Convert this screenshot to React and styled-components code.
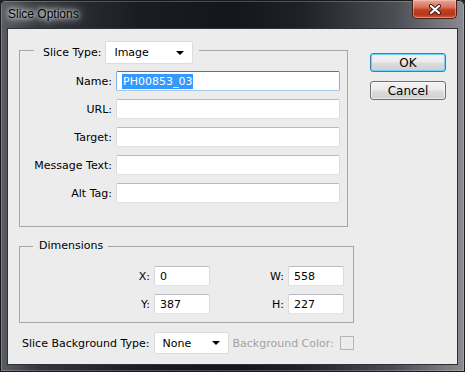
import React from "react";
import styled, { createGlobalStyle } from "styled-components";

const GlobalStyle = createGlobalStyle`
  html, body {
    margin: 0;
    padding: 0;
    background: #1c1e24;
  }
  * {
    box-sizing: border-box;
  }
`;

const Window = styled.div`
  width: 465px;
  height: 372px;
  display: flex;
  flex-direction: column;
  border-radius: 6px 6px 0 0;
  overflow: hidden;
  background: linear-gradient(
    90deg,
    #5b5e64 0%,
    #34373d 8%,
    #1a1c23 30%,
    #14161d 50%,
    #1f2129 65%,
    #4c4e55 85%,
    #8a8c91 100%
  );
  box-shadow: inset 0 0 0 1px #1a1a1a, inset 0 0 0 2px rgba(255, 255, 255, 0.22);
  font-family: "DejaVu Sans", Verdana, sans-serif;
  font-size: 11px;
  color: #000;
`;

const TitleBar = styled.div`
  height: 28px;
  display: flex;
  justify-content: space-between;
  align-items: flex-start;
  padding: 0 8px 0 8px;
  flex-shrink: 0;
`;

const Title = styled.div`
  font-family: "Liberation Sans", Arial, sans-serif;
  font-size: 12px;
  line-height: 28px;
  color: #000;
  text-shadow: 0 0 4px #fff, 0 0 8px rgba(255, 255, 255, 0.9),
    0 0 12px rgba(255, 255, 255, 0.7);
`;

const CloseButton = styled.div`
  width: 45px;
  height: 19px;
  display: flex;
  align-items: center;
  justify-content: center;
  border: 1px solid #4a2019;
  border-top: none;
  border-radius: 0 0 5px 5px;
  background: linear-gradient(
    #e9a698 0%,
    #d8715c 40%,
    #c43d1f 55%,
    #b8361b 80%,
    #d0583a 100%
  );
  box-shadow: inset 0 0 0 1px rgba(255, 210, 200, 0.45);
`;

const Client = styled.div`
  flex: 1;
  margin: 0 7px 7px 7px;
  border: 1px solid #2e3035;
  background: #ececec;
  display: flex;
  align-items: flex-start;
  padding: 12px 0 0 11px;
`;

const LeftColumn = styled.div`
  width: 335px;
  flex-shrink: 0;
  display: flex;
  flex-direction: column;
`;

const RightColumn = styled.div`
  margin-left: 16px;
  margin-top: 12px;
  display: flex;
  flex-direction: column;
  gap: 9px;
`;

const Group = styled.fieldset`
  margin: ${(p) => p.$top || 0}px 0 0 0;
  width: ${(p) => p.$width}px;
  border: 1px solid #a6a6a6;
  padding: ${(p) => p.$pad};
  min-width: 0;
`;

const Legend = styled.legend`
  margin-left: ${(p) => p.$left}px;
  padding: ${(p) => p.$pad};
  height: ${(p) => p.$height}px;
  line-height: ${(p) => p.$height}px;
  display: flex;
  align-items: flex-start;
  gap: 4px;
`;

const LegendLabel = styled.span`
  line-height: 23px;
`;

const FormGrid = styled.div`
  display: grid;
  grid-template-columns: 92px 224px;
  column-gap: 4px;
  row-gap: 8px;
  align-items: center;
`;

const DimGrid = styled.div`
  display: grid;
  grid-template-columns: 130px 56px 70px 56px;
  column-gap: 4px;
  row-gap: 8px;
  align-items: center;
`;

const Label = styled.label`
  text-align: right;
  white-space: nowrap;
  flex-shrink: 0;
  color: ${(p) => (p.$disabled ? "#a3a3a3" : "#000")};
`;

const Field = styled.div`
  height: 20px;
  background: #fff;
  border: 1px solid;
  border-color: ${(p) =>
    p.$focused ? "#3d7bad #7eb4ea #a4c9f0 #7eb4ea" : "#b9bbc0 #dadbdf #e1e3e6 #dadbdf"};
  border-radius: 2px;
  padding: 0 0 0 5px;
  display: flex;
  align-items: center;
  white-space: nowrap;
`;

const Selected = styled.span`
  background: #3399ff;
  color: #fff;
  line-height: 15px;
  padding: 0 1px;
`;

const Select = styled.div`
  width: ${(p) => p.$width}px;
  height: ${(p) => p.$height || 23}px;
  flex-shrink: 0;
  background: #fff;
  border: 1px solid #dcdcdc;
  border-radius: 2px;
  display: flex;
  align-items: center;
  justify-content: space-between;
  padding: 0 8px 0 8px;
`;

const Arrow = styled.span`
  width: 0;
  height: 0;
  border-left: 4px solid transparent;
  border-right: 4px solid transparent;
  border-top: 4px solid #000;
`;

const BottomRow = styled.div`
  display: flex;
  align-items: center;
  gap: 4px;
  margin-top: 9px;
  padding-left: 3px;
`;

const Swatch = styled.div`
  width: 14px;
  height: 14px;
  flex-shrink: 0;
  margin-left: 2px;
  border: 1px solid #b5b5b5;
  background: #ececec;
`;

const Button = styled.div`
  width: 76px;
  height: 19px;
  display: flex;
  align-items: center;
  justify-content: center;
  border: 1px solid ${(p) => (p.$primary ? "#3c7fb1" : "#707070")};
  border-radius: 3px;
  background: linear-gradient(#f2f2f2 0%, #ebebeb 48%, #dddddd 52%, #cfcfcf 100%);
  box-shadow: ${(p) =>
    p.$primary
      ? "inset 0 0 0 1px #6fd1f7"
      : "inset 0 0 0 1px rgba(255,255,255,0.6)"};
  font-size: 12px;
`;

const rows = [
  { label: "Name:", value: "PH00853_03", focused: true },
  { label: "URL:" },
  { label: "Target:" },
  { label: "Message Text:" },
  { label: "Alt Tag:" },
];

const CloseIcon = () => (
  <svg width="14" height="11" viewBox="0 0 14 11">
    <path d="M3 2 L11 9 M11 2 L3 9" stroke="#3a1a14" strokeWidth="4" strokeLinecap="round" />
    <path d="M3 2 L11 9 M11 2 L3 9" stroke="#fff" strokeWidth="2.2" strokeLinecap="round" />
  </svg>
);

const App = () => (
  <>
    <GlobalStyle />
    <Window>
      <TitleBar>
        <Title>Slice Options</Title>
        <CloseButton>
          <CloseIcon />
        </CloseButton>
      </TitleBar>
      <Client>
        <LeftColumn>
          <Group $width={329} $pad="12px 0 23px 0">
            <Legend $left={14} $pad="0 6px 0 9px" $height={18}>
              <LegendLabel>Slice Type:</LegendLabel>
              <Select $width={88}>
                Image
                <Arrow />
              </Select>
            </Legend>
            <FormGrid>
              {rows.map((row) => (
                <React.Fragment key={row.label}>
                  <Label>{row.label}</Label>
                  <Field $focused={row.focused}>
                    {row.value ? <Selected>{row.value}</Selected> : null}
                  </Field>
                </React.Fragment>
              ))}
            </FormGrid>
          </Group>

          <Group $width={335} $top={12} $pad="13px 0 8px 0">
            <Legend $left={13} $pad="0 5px 0 6px" $height={14}>
              Dimensions
            </Legend>
            <DimGrid>
              <Label>X:</Label>
              <Field>0</Field>
              <Label>W:</Label>
              <Field>558</Field>
              <Label>Y:</Label>
              <Field>387</Field>
              <Label>H:</Label>
              <Field>227</Field>
            </DimGrid>
          </Group>

          <BottomRow>
            <Label>Slice Background Type:</Label>
            <Select $width={75} $height={22}>
              None
              <Arrow />
            </Select>
            <Label $disabled>Background Color:</Label>
            <Swatch />
          </BottomRow>
        </LeftColumn>
        <RightColumn>
          <Button $primary>OK</Button>
          <Button>Cancel</Button>
        </RightColumn>
      </Client>
    </Window>
  </>
);

export default App;
